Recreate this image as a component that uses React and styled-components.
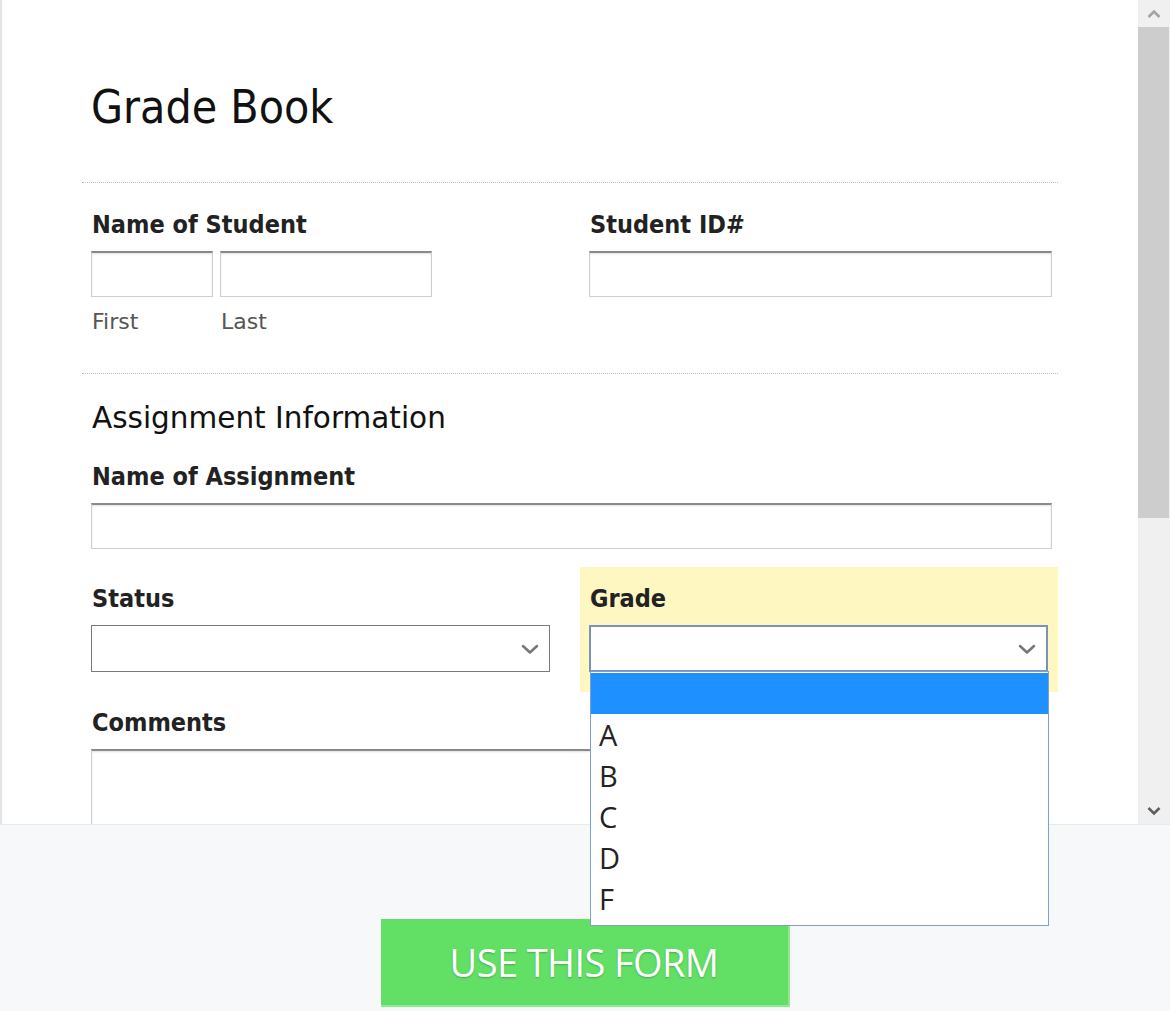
import React from "react";
import styled, { createGlobalStyle } from "styled-components";

const Global = createGlobalStyle`
  html, body { margin: 0; padding: 0; background: #f7f8fa; }
  body { font-family: "DejaVu Sans", sans-serif; }
  * { box-sizing: border-box; }
`;

const Page = styled.div`
  position: relative;
  width: 1170px;
  height: 1011px;
  overflow: hidden;
  display: flex;
  flex-direction: column;
`;

const Frame = styled.div`
  height: 825px;
  display: flex;
  background: #fff;
  border-bottom: 1px solid #e8e9ec;
`;

const Content = styled.div`
  flex: 1;
  overflow: hidden;
  border-left: 2px solid #e4e4e4;
  padding: 0 80px 0 80px;
`;

const Scrollbar = styled.div`
  width: 32px;
  background: #f0f0f0;
  display: flex;
  flex-direction: column;
`;

const ScrollArrow = styled.div`
  height: 27px;
  display: flex;
  align-items: center;
  justify-content: center;
  color: ${(p) => p.$color};
`;

const Thumb = styled.div`
  height: 491px;
  background: #cdcdcd;
  margin: 0 1px 0 0;
`;

const Track = styled.div`
  flex: 1;
`;

const Title = styled.h1`
  margin: 0;
  padding: 80px 9px 0;
  height: 182px;
  font-family: "DejaVu Sans Condensed", "DejaVu Sans", sans-serif;
  font-weight: normal;
  font-size: 46px;
  line-height: 54px;
  color: #111;
`;

const Divider = styled.hr`
  margin: 0;
  border: 0;
  border-top: 1px dotted #bdbdbd;
`;

const Row = styled.div`
  display: grid;
  grid-template-columns: ${(p) => p.$cols || "minmax(0, 1fr) minmax(0, 1fr)"};
  column-gap: 20px;
`;

const Cell = styled.div`
  padding: ${(p) => p.$pad || "0 9px"};
  background: ${(p) => (p.$highlight ? "#fff7c2" : "transparent")};
  display: flex;
  flex-direction: column;
`;

const Label = styled.label`
  font-family: "DejaVu Sans Condensed", "DejaVu Sans", sans-serif;
  font-weight: bold;
  font-size: 25px;
  line-height: 28px;
  color: #222;
  margin: 0 0 12px 1px;
`;

const SectionTitle = styled.h2`
  margin: 0;
  padding: 0 10px;
  font-family: "DejaVu Sans", sans-serif;
  font-weight: normal;
  font-size: 29.5px;
  line-height: 36px;
  color: #111;
`;

const TextInput = styled.div`
  width: ${(p) => p.$w || "100%"};
  height: 46px;
  background: #fff;
  border: 1px solid #cfcfcf;
  border-top: 2px solid #8a8a8a;
  box-shadow: inset 0 1px 2px rgba(0, 0, 0, 0.12);
`;

const NameInputs = styled.div`
  display: grid;
  grid-template-columns: 122px 212px;
  column-gap: 7px;
`;

const SubLabel = styled.span`
  font-family: "DejaVu Sans", sans-serif;
  font-size: 22px;
  color: #555;
  line-height: 26px;
`;

const Select = styled.div`
  width: ${(p) => p.$w || "100%"};
  height: 47px;
  background: #fff;
  border: ${(p) => (p.$focus ? "2px solid #7c93b9" : "1px solid #7a7a7a")};
  display: flex;
  align-items: center;
  justify-content: flex-end;
  padding-right: 9px;
  color: #777;
`;

const TextArea = styled.div`
  height: 120px;
  background: #fff;
  border: 1px solid #cfcfcf;
  border-top: 2px solid #8a8a8a;
  box-shadow: inset 0 1px 2px rgba(0, 0, 0, 0.12);
`;

const Footer = styled.div`
  flex: 1;
  background: #f7f8fa;
  display: flex;
  justify-content: center;
  align-items: flex-end;
  padding: 0 0 4px 0;
`;

const UseButton = styled.button`
  width: 409px;
  height: 88px;
  background: #62e066;
  border: 0;
  border-right: 2px solid #8fea92;
  border-bottom: 2px solid #8fea92;
  color: #fff;
  font-family: "Open Sans", sans-serif;
  font-size: 38px;
  letter-spacing: -0.6px;
  text-shadow: 0 1px 2px rgba(0, 0, 0, 0.25);
  padding: 0;
`;

const Menu = styled.ul`
  position: absolute;
  left: 590px;
  top: 671px;
  width: 459px;
  margin: 0;
  padding: 1px 0 6px;
  list-style: none;
  background: #fff;
  border: 1px solid #7f9fcf;
  z-index: 5;
`;

const Option = styled.li`
  height: 41px;
  padding-left: 8px;
  font-family: "Open Sans", sans-serif;
  font-size: 29px;
  line-height: 41px;
  color: #222;
  background: ${(p) => (p.$active ? "#1e90ff" : "transparent")};
`;

const Chevron = ({ size = 20, stroke = 2.5 }) => (
  <svg width={size} height={size} viewBox="0 0 20 20" fill="none">
    <path d="M3 7 L10 13.5 L17 7" stroke="currentColor" strokeWidth={stroke} strokeLinecap="round" strokeLinejoin="round" />
  </svg>
);

const ChevronUp = ({ size = 16 }) => (
  <svg width={size} height={size} viewBox="0 0 16 16" fill="none">
    <path d="M2.5 11 L8 5.5 L13.5 11" stroke="currentColor" strokeWidth="2.6" />
  </svg>
);

const ChevronDown = ({ size = 16 }) => (
  <svg width={size} height={size} viewBox="0 0 16 16" fill="none">
    <path d="M2.5 5 L8 10.5 L13.5 5" stroke="currentColor" strokeWidth="2.6" />
  </svg>
);

export default function App() {
  return (
    <Page>
      <Global />
      <Frame>
        <Content>
          <Title>Grade Book</Title>
          <Divider />
          <Row style={{ paddingTop: 28 }}>
            <Cell>
              <Label>Name of Student</Label>
              <NameInputs>
                <TextInput />
                <TextInput />
              </NameInputs>
              <NameInputs style={{ marginTop: 12, paddingLeft: 1 }}>
                <SubLabel>First</SubLabel>
                <SubLabel>Last</SubLabel>
              </NameInputs>
            </Cell>
            <Cell>
              <Label>Student ID#</Label>
              <TextInput $w="463px" />
            </Cell>
          </Row>
          <Divider style={{ marginTop: 38 }} />
          <div style={{ paddingTop: 26 }}>
            <SectionTitle>Assignment Information</SectionTitle>
          </div>
          <Row $cols="1fr" style={{ paddingTop: 27 }}>
            <Cell>
              <Label>Name of Assignment</Label>
              <TextInput $w="961px" />
            </Cell>
          </Row>
          <Row style={{ marginTop: 18 }}>
            <Cell $pad="18px 9px 0">
              <Label>Status</Label>
              <Select $w="459px">
                <Chevron />
              </Select>
            </Cell>
            <Cell $highlight $pad="18px 10px 20px 9px">
              <Label>Grade</Label>
              <Select $focus $w="459px">
                <Chevron />
              </Select>
            </Cell>
          </Row>
          <Row $cols="1fr" style={{ paddingTop: 17 }}>
            <Cell>
              <Label>Comments</Label>
              <TextArea />
            </Cell>
          </Row>
        </Content>
        <Scrollbar>
          <ScrollArrow $color="#a3a3a3">
            <ChevronUp />
          </ScrollArrow>
          <Thumb />
          <Track />
          <ScrollArrow $color="#5e5e5e">
            <ChevronDown />
          </ScrollArrow>
        </Scrollbar>
      </Frame>
      <Footer>
        <UseButton>USE THIS FORM</UseButton>
      </Footer>
      <Menu>
        <Option $active>&nbsp;</Option>
        <Option>A</Option>
        <Option>B</Option>
        <Option>C</Option>
        <Option>D</Option>
        <Option>F</Option>
      </Menu>
    </Page>
  );
}
